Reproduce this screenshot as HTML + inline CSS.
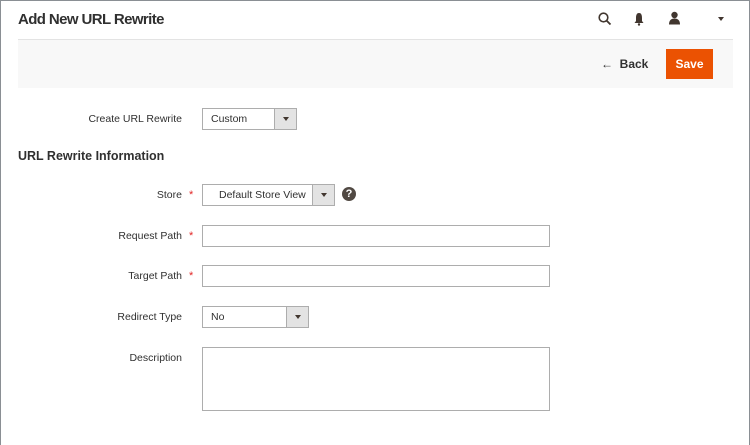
<!DOCTYPE html>
<html><head><style>
*{box-sizing:border-box;margin:0;padding:0}
body{width:750px;height:445px;background:#fff;font-family:"Liberation Sans",sans-serif;color:#303030;position:relative;overflow:hidden}
.frame{position:absolute;left:0;top:0;width:750px;height:445px;border:1px solid #8a8f94;border-bottom:none;pointer-events:none}
.abs{position:absolute}
h1{position:absolute;left:18px;top:11px;font-size:15px;font-weight:bold;color:#303030;letter-spacing:-0.6px}
.bar{left:18px;top:39px;width:715px;height:49px;background:#f8f8f8;border-top:1px solid #e3e3e3}
.save{left:666px;top:49px;width:47px;height:30px;background:#eb5202;color:#fff;font-weight:bold;font-size:12px;text-align:center;line-height:30px}
.back{left:601px;top:57px;font-size:12px;font-weight:bold;color:#303030}
.lbl{font-size:10.5px;text-align:right;width:160px;left:22px;color:#303030}
.req{color:#e22626;font-size:11px;left:189px}
.box{border:1px solid #adadad;background:#fff;font-size:10.5px;line-height:20px;padding-left:8px}
.arr{position:absolute;right:0;top:0;bottom:0;width:22px;background:#e3e3e3;border-left:1px solid #adadad}
.arr:after{content:"";position:absolute;left:8px;top:8px;border-left:3px solid transparent;border-right:3px solid transparent;border-top:4px solid #41362f}
</style></head><body>
<div class="frame"></div>
<h1>Add New URL Rewrite</h1>
<svg class="abs" style="left:598px;top:12px" width="14" height="14" viewBox="0 0 14 14"><circle cx="5.5" cy="5.5" r="4.3" fill="none" stroke="#41362f" stroke-width="1.6"/><path d="M8.6 8.6L12.5 12.5" stroke="#41362f" stroke-width="1.8"/></svg>
<svg class="abs" style="left:633px;top:12px" width="12" height="14" viewBox="0 0 12 14"><path d="M6 1C3.5 1 3 3.5 3 6v3L1.5 11h9L9 9V6c0-2.5-.5-5-3-5z" fill="#41362f"/><circle cx="6" cy="12.5" r="1.2" fill="#41362f"/></svg>
<svg class="abs" style="left:668px;top:11px" width="13" height="14" viewBox="0 0 13 14"><circle cx="6.5" cy="4" r="3.2" fill="#41362f"/><path d="M1 13.5c0-4 2-6 5.5-6s5.5 2 5.5 6z" fill="#41362f"/></svg>
<div class="abs" style="left:718px;top:17px;border-left:3px solid transparent;border-right:3px solid transparent;border-top:4px solid #41362f"></div>
<div class="abs bar"></div>
<div class="abs back">&#8592;&nbsp; Back</div>
<div class="abs save">Save</div>
<div class="abs lbl" style="top:113px">Create URL Rewrite</div>
<div class="abs box" style="left:202px;top:108px;width:95px;height:22px">Custom<div class="arr"></div></div>
<div class="abs" style="left:18px;top:149px;font-size:12.5px;font-weight:bold">URL Rewrite Information</div>
<div class="abs lbl" style="top:189px">Store</div><div class="abs req" style="top:189px">*</div>
<div class="abs box" style="left:202px;top:184px;width:133px;height:22px;padding-left:16px">Default Store View<div class="arr"></div></div>
<div class="abs" style="left:342px;top:187px;width:14px;height:14px;border-radius:50%;background:#514943;color:#fff;font-size:11px;font-weight:bold;text-align:center;line-height:14px">?</div>
<div class="abs lbl" style="top:230px">Request Path</div><div class="abs req" style="top:230px">*</div>
<div class="abs box" style="left:202px;top:225px;width:348px;height:22px"></div>
<div class="abs lbl" style="top:270px">Target Path</div><div class="abs req" style="top:270px">*</div>
<div class="abs box" style="left:202px;top:265px;width:348px;height:22px"></div>
<div class="abs lbl" style="top:311px">Redirect Type</div>
<div class="abs box" style="left:202px;top:306px;width:107px;height:22px">No<div class="arr"></div></div>
<div class="abs lbl" style="top:352px">Description</div>
<div class="abs box" style="left:202px;top:347px;width:348px;height:64px"></div>
</body></html>
